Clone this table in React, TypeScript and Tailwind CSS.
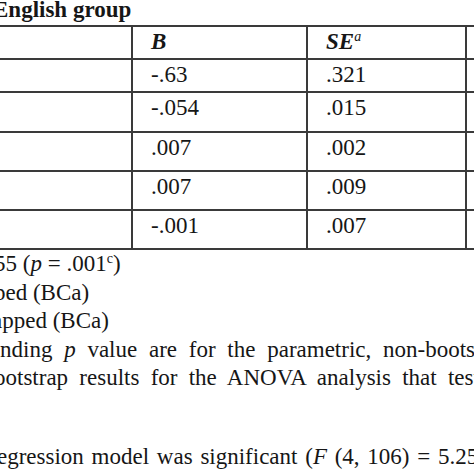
import React from 'react';

const rows = [
  { b: '-.63', se: '.321', h: 'h-[33px]' },
  { b: '-.054', se: '.015', h: 'h-[40px]' },
  { b: '.007', se: '.002', h: 'h-[39px]' },
  { b: '.007', se: '.009', h: 'h-[39px]' },
  { b: '-.001', se: '.007', h: 'h-[39px]' },
];

const App: React.FC = () => {
  return (
    <div className="w-[474px] h-[474px] overflow-hidden bg-white text-[#161616] text-[23px] font-['Liberation_Serif','Times_New_Roman',serif]">
      <div className="-ml-[7px] h-[20px] leading-[20px] font-bold whitespace-nowrap">English group</div>

      {/* table */}
      <div className="mt-[5px] w-[600px] border-t-2 border-[#3a3a3a]">
        <div className="flex h-[33px] border-b-2 border-[#3a3a3a]">
          <div className="w-[133px] shrink-0 border-r-2 border-[#3a3a3a]" />
          <div className="w-[175px] shrink-0 border-r-2 border-[#3a3a3a] pl-[18px] pt-[2px] leading-[26px] font-bold italic">B</div>
          <div className="w-[159px] shrink-0 border-r-2 border-[#3a3a3a] pl-[18px] pt-[2px] leading-[26px] font-bold italic">
            SE<sup className="text-[14px] font-normal italic -top-[0.6em]">a</sup>
          </div>
          <div className="flex-1" />
        </div>
        {rows.map((r, i) => (
          <div key={i} className={`flex border-b-2 border-[#3a3a3a] ${r.h}`}>
            <div className="w-[133px] shrink-0 border-r-2 border-[#3a3a3a]" />
            <div className="w-[175px] shrink-0 border-r-2 border-[#3a3a3a] pl-[18px] pt-[2px] leading-[26px]">{r.b}</div>
            <div className="w-[159px] shrink-0 border-r-2 border-[#3a3a3a] pl-[18px] pt-[2px] leading-[26px]">{r.se}</div>
            <div className="flex-1" />
          </div>
        ))}
      </div>

      {/* notes */}
      <div className="leading-[28.5px] whitespace-nowrap">
        <div className="-ml-[6px]">
          55 (<i>p</i> = .001<sup className="text-[14px] -top-[0.6em]">c</sup>)
        </div>
        <div className="-ml-[6px]">ped (BCa)</div>
        <div className="-ml-[8px]">apped (BCa)</div>
        <div className="[word-spacing:6px]">
          nding <i>p</i> value are for the parametric, non-bootstrapped
        </div>
        <div className="-ml-[6px] [word-spacing:5.5px]">ootstrap results for the ANOVA analysis that tested</div>
        <div className="mt-[50px] -ml-[3px] [word-spacing:2px]">
          egression model was significant (<i>F</i> (4, 106) = 5.255, <i>p</i> = .001)
        </div>
      </div>
    </div>
  );
};

export default App;
